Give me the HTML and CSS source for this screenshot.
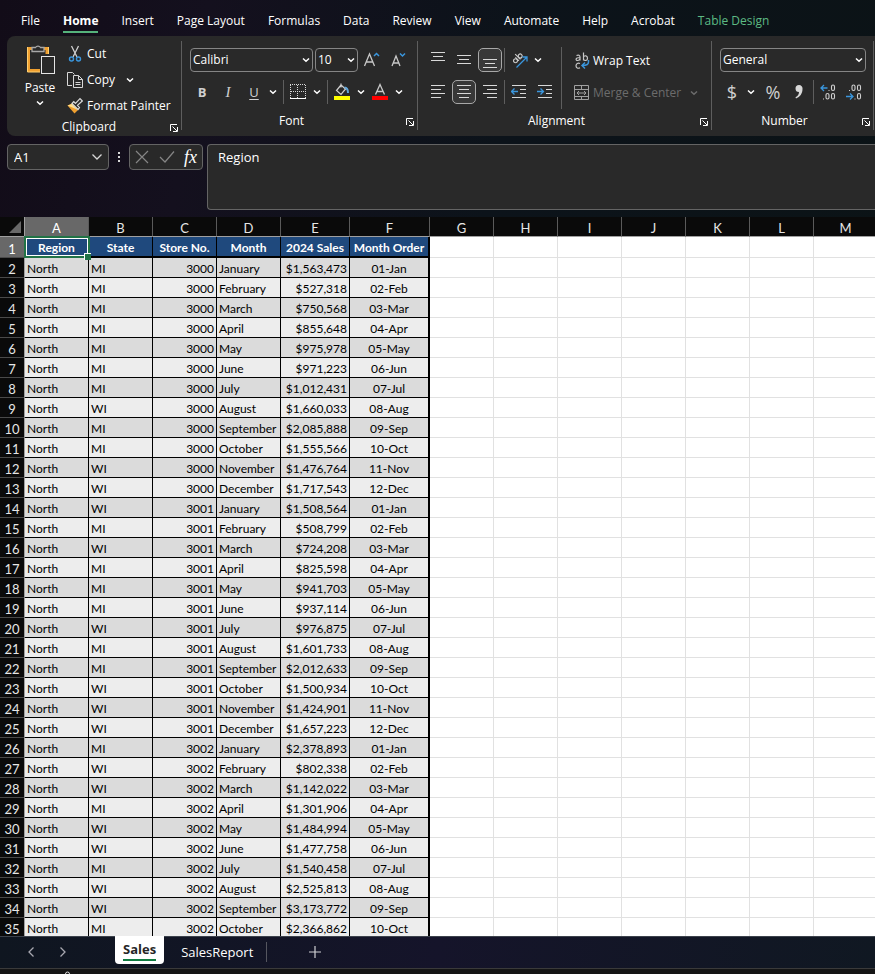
FILE: index.html
```html
<!DOCTYPE html>
<html lang="en">
<head>
<meta charset="utf-8">
<title>Sales workbook</title>
<link rel="stylesheet" href="styles.css">
</head>
<body>
<svg class="defs" aria-hidden="true">
  <symbol id="chev" viewBox="0 0 8 6"><path d="M1 1.5 4 4.3 7 1.5" fill="none" stroke="currentColor" stroke-width="1.5"/></symbol>
  <symbol id="launch" viewBox="0 0 10 10"><path d="M1.5 8V1.500H8M3.500 3.500 8 8M8.500 4v4.500H4" fill="none" stroke="currentColor"/></symbol>
</svg>

<nav class="tabs" aria-label="Ribbon tabs">
  <button>File</button>
  <button class="active">Home</button>
  <button>Insert</button>
  <button>Page Layout</button>
  <button>Formulas</button>
  <button>Data</button>
  <button>Review</button>
  <button>View</button>
  <button>Automate</button>
  <button>Help</button>
  <button>Acrobat</button>
  <button class="context">Table Design</button>
</nav>

<section class="ribbon" aria-label="Home ribbon">
  <div class="group clipboard">
    <div class="tools">
      <button class="paste">
        <svg width="30" height="32" viewBox="-1 0 30 32" fill="none">
          <path d="M6 5.500H2.500v22H14" stroke="#f0a030" stroke-width="3"/>
          <path d="M17 5.500h4V11" stroke="#f0a030" stroke-width="3"/>
          <path d="M1.500 4v25H14M22.500 4v7" stroke="#ffd070"/>
          <path d="M6 8.500v-4h3.500a3 3 0 0 1 5 0H18v4z" fill="#292929" stroke="#a8a8a8" stroke-width="1.300"/>
          <rect x="15.500" y="13.500" width="13" height="17" fill="#292929" stroke="#e4e4e4"/>
        </svg>
        <span>Paste</span>
        <svg class="chev"><use href="#chev"/></svg>
      </button>
      <div class="clip-list">
        <button>
          <svg width="16" height="18" viewBox="0 0 16 18" fill="none"><path d="M4.500 1 10 12M11.500 1 6 12" stroke="#d0d0d0" stroke-width="1.300"/><circle cx="4.500" cy="14" r="2" stroke="#3a96dd" stroke-width="1.400"/><circle cx="11.500" cy="14" r="2" stroke="#3a96dd" stroke-width="1.400"/></svg>
          <span>Cut</span>
        </button>
        <button>
          <svg width="16" height="18" viewBox="0 0 16 18" fill="none" stroke="#d8d8d8"><path d="M5 14.500H.5V1.500h5l2 2"/><path d="M6.500 4.500h5l4 4v8h-9zM11.500 4.500v4h4M8.500 11.500h5M8.500 13.500h5"/></svg>
          <span>Copy</span>
          <svg class="chev"><use href="#chev"/></svg>
        </button>
        <button>
          <svg width="16" height="18" viewBox="0 0 16 18" fill="none"><path d="M.5 8.500 6 6l6 6-4.500 4.500z" fill="#f0a030"/><path d="M.5 8.500 5 7l5 5.500z" fill="#ffe08a"/><path d="m5 6.500 6 6 1.500-2-2-2.200L15.300 4 13 1.700 8.500 6.300 6.700 4.700z" fill="#292929" stroke="#d8d8d8" stroke-width="1.200"/></svg>
          <span>Format Painter</span>
        </button>
      </div>
    </div>
    <footer><span>Clipboard</span><button class="launch" aria-label="Clipboard options"><svg><use href="#launch"/></svg></button></footer>
  </div>

  <div class="group font">
    <div class="tools rows">
      <div class="row">
        <label class="combo name"><select aria-label="Font"><option>Calibri</option></select><svg class="chev"><use href="#chev"/></svg></label>
        <label class="combo size"><select aria-label="Font size"><option>10</option></select><svg class="chev"><use href="#chev"/></svg></label>
        <button class="tool" aria-label="Increase font size"><svg width="18" height="18" viewBox="0 0 18 18" fill="none"><path d="M1.500 15 6.500 3l5 12M3.200 11h6.600" stroke="#c8c8c8" stroke-width="1.300"/><path d="m11 5 2.500-2.500L16 5" stroke="#3a96dd" stroke-width="1.500"/></svg></button>
        <button class="tool" aria-label="Decrease font size"><svg width="18" height="18" viewBox="0 0 18 18" fill="none"><path d="M3 15 7 5l4 10M4.300 12h5.400" stroke="#c8c8c8" stroke-width="1.300"/><path d="m11 2.500 2.500 2.500L16 2.500" stroke="#3a96dd" stroke-width="1.500"/></svg></button>
      </div>
      <div class="row">
        <button class="tool letter"><b>B</b></button>
        <button class="tool letter"><i>I</i></button>
        <button class="tool letter"><u>U</u></button>
        <button class="drop" aria-label="Underline styles"><svg class="chev"><use href="#chev"/></svg></button>
        <span class="sep"></span>
        <button class="tool" aria-label="Borders"><svg width="16" height="16" viewBox="0 0 16 16" fill="none"><path d="M0 .5h16M1 7.500h15M.5 1v13M7.500 1v13M15.500 1v13" stroke="#d8d8d8" stroke-dasharray="1 1"/><path d="M0 14.500h16" stroke="#fff"/></svg></button>
        <button class="drop" aria-label="Border styles"><svg class="chev"><use href="#chev"/></svg></button>
        <span class="sep"></span>
        <button class="tool" aria-label="Fill color"><svg width="16" height="18" viewBox="0 0 16 18" fill="none"><path d="M7 .5v4M7 2 2.500 7.500 7 11.500 11.500 6 7 2" stroke="#d0d0d0" stroke-width="1.200"/><path d="M10.500 4.500c2.500 0 3.500 1.500 3.500 5.500" stroke="#62a8dd" stroke-width="2"/><path d="M0 13h16v4H0z" fill="#ff0"/></svg></button>
        <button class="drop" aria-label="Fill colors"><svg class="chev"><use href="#chev"/></svg></button>
        <button class="tool" aria-label="Font color"><svg width="16" height="18" viewBox="0 0 16 18" fill="none"><path d="M3.500 11.500 8 1.500l4.500 10M5 8.500h6" stroke="#c8c8c8" stroke-width="1.300"/><path d="M0 13h16v4H0z" fill="#f00"/></svg></button>
        <button class="drop" aria-label="Font colors"><svg class="chev"><use href="#chev"/></svg></button>
      </div>
    </div>
    <footer><span>Font</span><button class="launch" aria-label="Font options"><svg><use href="#launch"/></svg></button></footer>
  </div>

  <div class="group alignment">
    <div class="tools">
      <div class="rows">
        <div class="row">
          <button class="tool" aria-label="Top align"><svg width="14" height="16"><path d="M0 .5h14M2 4.500h10M0 8.500h14" stroke="#d8d8d8"/></svg></button>
          <button class="tool" aria-label="Middle align"><svg width="14" height="16"><path d="M0 3.500h14M2 7.500h10M0 11.500h14" stroke="#d8d8d8"/></svg></button>
          <button class="tool on" aria-label="Bottom align"><svg width="14" height="16"><path d="M0 7.500h14M2 11.500h10M0 15.500h14" stroke="#d8d8d8"/></svg></button>
          <span class="sep"></span>
          <button class="tool" aria-label="Orientation"><svg width="17" height="17" viewBox="0 0 17 17" fill="none"><g transform="rotate(-45 7 7)" stroke="#c8c8c8" stroke-width="1.200"><circle cx="4" cy="6.500" r="2"/><path d="M6.300 4v5M8.500 1.500V9"/><circle cx="10.600" cy="6.500" r="2"/></g><path d="M5.500 15.500 15.500 5.500M11.500 5h4.500v4.500" stroke="#3a96dd" stroke-width="1.300"/></svg></button>
          <button class="drop" aria-label="Orientation choices"><svg class="chev"><use href="#chev"/></svg></button>
        </div>
        <div class="row">
          <button class="tool" aria-label="Align left"><svg width="14" height="16"><path d="M0 1.500h14M0 5.500h10M0 9.500h14M0 13.500h10" stroke="#d8d8d8"/></svg></button>
          <button class="tool on" aria-label="Center"><svg width="14" height="16"><path d="M0 1.500h14M2 5.500h10M0 9.500h14M2 13.500h10" stroke="#d8d8d8"/></svg></button>
          <button class="tool" aria-label="Align right"><svg width="14" height="16"><path d="M0 1.500h14M4 5.500h10M0 9.500h14M4 13.500h10" stroke="#d8d8d8"/></svg></button>
          <span class="sep"></span>
          <button class="tool" aria-label="Decrease indent"><svg width="16" height="16" fill="none"><path d="M1 1.500h14M9 5.500h6M9 9.500h6M1 13.500h14" stroke="#d8d8d8"/><path d="M1 7.500h6M3.500 4.500l-3 3 3 3" stroke="#3a96dd" stroke-width="1.300"/></svg></button>
          <button class="tool" aria-label="Increase indent"><svg width="16" height="16" fill="none"><path d="M1 1.500h14M9 5.500h6M9 9.500h6M1 13.500h14" stroke="#d8d8d8"/><path d="M0 7.500h6M3.500 4.500l3 3-3 3" stroke="#3a96dd" stroke-width="1.300"/></svg></button>
        </div>
      </div>
      <span class="sep tall"></span>
      <div class="rows labelled">
        <button>
          <svg width="16" height="18" viewBox="0 0 16 18" fill="none"><g stroke="#c8c8c8" stroke-width="1.200"><path d="M2.500 3.500c2-1 3.500-.3 3.500 1.500v3.500M6 5.500c-5 0-4.500 3-2.500 3 1.500 0 2.500-1 2.500-2M9.500.5v8M9.500 5c1-2 4-1.500 4 1.200s-3 3-4 1M6 11.500c-2-1-4 0-4 2.300s2 3 4 2"/></g><path d="M14.500 8v2c0 2.500-2 3.500-6 3.500M11 10.500l-3 3 3 3" stroke="#3a96dd" stroke-width="1.500"/></svg>
          <span>Wrap Text</span>
        </button>
        <button disabled>
          <svg width="16" height="18" viewBox="0 0 16 18" fill="none" stroke="#a0a0a0"><path d="M.5 1.500h14v14H.5zM.5 5.500h14M.5 12.500h14M7.500 1.500v4M7.500 12.500v3M3 9h9M5 7 3 9l2 2M10 7l2 2-2 2"/></svg>
          <span>Merge &amp; Center</span>
          <svg class="chev"><use href="#chev"/></svg>
        </button>
      </div>
    </div>
    <footer><span>Alignment</span><button class="launch" aria-label="Alignment options"><svg><use href="#launch"/></svg></button></footer>
  </div>

  <div class="group number">
    <div class="tools rows">
      <div class="row">
        <label class="combo format"><select aria-label="Number format"><option>General</option></select><svg class="chev"><use href="#chev"/></svg></label>
      </div>
      <div class="row">
        <button class="tool sign">$</button>
        <button class="drop" aria-label="Accounting formats"><svg class="chev"><use href="#chev"/></svg></button>
        <button class="tool sign percent">%</button>
        <button class="tool" aria-label="Comma style"><svg width="10" height="14" viewBox="0 0 10 14"><path d="M5 0a3.500 3.500 0 0 1 3.500 4C8.500 8.500 6 12 2 13.500L1.500 12.300C4 11 5 9 5 7a3.500 3.500 0 1 1 0-7z" fill="#d8d8d8"/></svg></button>
        <span class="sep"></span>
        <button class="tool" aria-label="Increase decimal"><svg width="16" height="16" viewBox="0 0 16 16" fill="none"><g stroke="#d0d0d0" stroke-width="1.100"><rect x="11.500" y="1" width="3" height="5.500" rx="1.500"/><rect x="6" y="9.500" width="3" height="5.500" rx="1.500"/><rect x="11.500" y="9.500" width="3" height="5.500" rx="1.500"/><path d="M8.500 6.500h1M3 15h1"/></g><path d="M1 4h6.500M4 1 1 4l3 3" stroke="#3a96dd" stroke-width="1.300"/></svg></button>
        <button class="tool" aria-label="Decrease decimal"><svg width="16" height="16" viewBox="0 0 16 16" fill="none"><g stroke="#d0d0d0" stroke-width="1.100"><rect x="6" y="1" width="3" height="5.500" rx="1.500"/><rect x="11.500" y="1" width="3" height="5.500" rx="1.500"/><rect x="11.500" y="9.500" width="3" height="5.500" rx="1.500"/><path d="M3 6.500h1M8.500 15h1"/></g><path d="M0 12.500h7M4 9.500l3 3-3 3" stroke="#3a96dd" stroke-width="1.300"/></svg></button>
      </div>
    </div>
    <footer><span>Number</span><button class="launch" aria-label="Number options"><svg><use href="#launch"/></svg></button></footer>
  </div>
</section>

<section class="formula-bar" aria-label="Formula bar">
  <label class="name-box"><input value="A1" aria-label="Name box"><svg width="12" height="8" viewBox="0 0 12 8"><path d="m1.500 1.500 4.500 4.500 4.500-4.500" fill="none" stroke="#d8d8d8" stroke-width="1.300"/></svg></label>
  <span class="grip"><i></i><i></i><i></i></span>
  <div class="entry">
    <button aria-label="Cancel"><svg width="14" height="14"><path d="m1 1 12 12M13 1 1 13" stroke="#858585" stroke-width="1.200"/></svg></button>
    <button aria-label="Enter"><svg width="16" height="14"><path d="m1 7 5 5L15 1.500" fill="none" stroke="#858585" stroke-width="1.200"/></svg></button>
    <button class="fx">fx</button>
  </div>
  <textarea aria-label="Formula">Region</textarea>
</section>

<main class="sheet">
  <table>
    <colgroup><col class="c-head"><col span="4"><col class="c-sales"><col class="c-order"><col span="7"></colgroup>
    <thead id="letters"></thead>
    <tbody id="cells"></tbody>
  </table>
</main>

<nav class="sheet-tabs" aria-label="Sheets">
  <button class="step" aria-label="Previous sheet"><svg width="8" height="12"><path d="M6.500 1.500 2 6l4.500 4.500" fill="none" stroke="#a8a8b0" stroke-width="1.300"/></svg></button>
  <button class="step" aria-label="Next sheet"><svg width="8" height="12"><path d="M1.500 1.500 6 6l-4.500 4.500" fill="none" stroke="#a8a8b0" stroke-width="1.300"/></svg></button>
  <button class="tab current"><span>Sales</span></button>
  <button class="tab">SalesReport</button>
  <button class="add" aria-label="New sheet"><svg width="12" height="12"><path d="M6 0v12M0 6h12" stroke="#d0d0d4" stroke-width="1.200"/></svg></button>
</nav>
<div class="status"><svg width="7" height="5"><circle cx="3.500" cy="5" r="2" fill="none" stroke="#e0e0e0"/></svg></div>
<script src="sheet.js"></script>
</body>
</html>
```
FILE: styles.css
```css
* { box-sizing: border-box; }

body {
  margin: 0;
  height: 100vh;
  display: flex;
  flex-direction: column;
  overflow: hidden;
  background: linear-gradient(100deg, #120c18 0, #14101e 20%, #0c131a 50%, #0b1315 100%);
  color: #fff;
  font: 12px/16px "Open Sans", "Noto Sans", sans-serif;
}

.defs { position: absolute; width: 0; height: 0; }

button, select, input, textarea {
  margin: 0;
  padding: 0;
  border: 0;
  background: none;
  color: inherit;
  font: inherit;
  outline: 0;
}

button { white-space: nowrap; }
svg { display: block; flex: none; }
.chev { width: 8px; height: 6px; }

/* Ribbon tabs */
.tabs {
  flex: none;
  display: flex;
  align-items: flex-end;
  gap: 23px;
  height: 36px;
  padding: 0 21px 3px;
}
.tabs button { height: 20px; padding-bottom: 2px; border-bottom: 2px solid transparent; }
.tabs .active { font-weight: 700; border-color: #55b27b; }
.tabs .context { color: #5dba84; }

/* Ribbon */
.ribbon {
  flex: none;
  display: flex;
  height: 100px;
  margin-left: 7px;
  background: #292929;
  border-radius: 8px 0 0 8px;
}
.group {
  flex: none;
  display: flex;
  flex-direction: column;
  margin: 5px 0 6px;
  border-right: 1px solid #5e5e5e;
}
.clipboard { width: 175px; }
.font { width: 236px; }
.alignment { width: 294px; }
.number { width: 162px; }

.tools { flex: 1; display: flex; }
.group footer { position: relative; height: 16px; margin-bottom: 1px; text-align: center; }
.clipboard footer { padding-right: 10px; }
.font footer, .alignment footer, .number footer { padding-right: 16px; }
.launch { position: absolute; right: 2px; bottom: 2px; }
.launch svg { width: 10px; height: 10px; }

.paste { width: 66px; display: flex; flex-direction: column; align-items: center; padding-top: 2px; }
.paste span { margin: 5px 0 4px; }
.clip-list button { display: flex; align-items: center; gap: 4px; height: 26px; }
.clip-list { margin-left: -6px; }
.clip-list .chev { margin-left: 7px; }

.rows { flex-direction: column; gap: 8px; }
.alignment .rows { display: flex; }
.rows { padding: 7px 0 0 8px; }
.row { display: flex; align-items: center; gap: 2px; height: 24px; }
.tool { width: 24px; height: 24px; display: flex; align-items: center; justify-content: center; color: #d0d0d0; }
.tool.on { border: 1px solid #a8a8a8; border-radius: 5px; background: #383838; }
.letter { font-size: 13px; }
.letter i { font-family: "Liberation Serif", serif; font-size: 15px; }
.letter u { text-underline-offset: 2px; }
.drop { width: 10px; height: 24px; display: flex; align-items: center; justify-content: center; }
.sep { width: 1px; height: 24px; background: #5e5e5e; }
.font .sep { margin-left: 3px; }
.sep.tall { height: 62px; margin: 6px 0 0 4px; }

.combo {
  display: grid;
  align-items: center;
  height: 24px;
  border: 1px solid #858585;
  border-radius: 4px;
}
.combo > * { grid-area: 1 / 1; }
.combo select { appearance: none; width: 100%; height: 22px; padding-left: 2px; font-size: 12px; }
.combo .chev { justify-self: end; margin-right: 2px; pointer-events: none; }
.combo.name { width: 123px; }
.combo.size { width: 43px; }
.combo.format { width: 146px; }

.alignment .labelled { padding: 8px 0 0 12px; }
.labelled button { display: flex; align-items: center; gap: 3px; height: 24px; }
.labelled button:disabled { color: #6c6c6c; }
.labelled .chev { margin-left: 6px; }

.sign { font-size: 18px; line-height: 24px; }
.percent { margin-left: 3px; }

/* Formula bar */
.formula-bar {
  flex: none;
  display: flex;
  align-items: flex-start;
  height: 81px;
  padding: 8px 0 7px 7px;
  font-size: 13px;
}
.name-box, .entry, .formula-bar textarea {
  background: #292929;
  border: 1px solid #646464;
  border-radius: 4px;
}
.name-box { display: flex; align-items: center; width: 102px; height: 26px; padding: 0 5px 0 6px; }
.name-box input { flex: 1; min-width: 0; }
.grip { display: flex; flex-direction: column; gap: 2px; width: 20px; height: 26px; align-items: center; justify-content: center; }
.grip i { width: 2px; height: 2px; background: #d8d8d8; }
.entry { display: flex; align-items: center; justify-content: space-between; width: 74px; height: 26px; padding: 0 5px; }
.fx { font: italic 18px/20px "Liberation Serif", serif; }
.formula-bar textarea {
  flex: 1;
  height: 66px;
  margin-left: 4px;
  padding: 4px 10px;
  border-right: 0;
  border-radius: 4px 0 0 4px;
  resize: none;
  overflow: hidden;
}

/* Grid */
.sheet { flex: 1; min-height: 0; overflow: hidden; background: #fff; }
table { width: 878px; table-layout: fixed; border-collapse: separate; border-spacing: 0; color: #000; font: 12px/16px Lato, sans-serif; }
col { width: 64px; }
.c-head { width: 25px; }
.c-sales { width: 69px; }
.c-order { width: 80px; }
th, td { height: 20px; padding: 3px 2px 0; white-space: nowrap; overflow: hidden; }
tbody td { border-right: 1px solid #e1e1e1; border-bottom: 1px solid #e1e1e1; }
thead th {
  background: #0a0a0a;
  color: #e6e6e6;
  border-right: 1px solid #5a5a5a;
  border-bottom: 1px solid #a0a0a0;
  font-size: 13px;
  font-weight: 400;
}
tbody th { background: #0a0a0a; color: #e6e6e6; border-right: 1px solid #a0a0a0; border-bottom: 1px solid #4a4a4a; font-size: 13px; font-weight: 400; padding: 3px 0 0; }
thead .picked, tbody .picked { background: #686868; color: #fff; }
.corner svg { margin: 0 0 0 7px; }
thead .corner { padding: 0; border-right-color: #a0a0a0; }

tbody .data { background: #ededed; border-color: #000; }
tbody tr:nth-child(even) .data { background: #dbdbdb; }
tbody .title { height: 21px; background: #1f497d; color: #fff; border-color: #000; border-bottom-width: 2px; font-weight: 700; text-align: center; padding: 2px 0 0; }
tbody .last { border-right-width: 2px; }
.num { text-align: right; }
.mid { text-align: center; }
tbody .active-cell { position: relative; overflow: visible; }
.active-cell::before { content: ""; position: absolute; inset: 0 -1px -1px 0; box-shadow: inset 0 0 0 2px #fff; outline: 2px solid #217346; outline-offset: -1px; }
.active-cell::after { content: ""; position: absolute; right: -3px; bottom: -4px; width: 6px; height: 6px; background: #217346; border: solid #fff; border-width: 1px 0 0 1px; }

/* Sheet tabs and status */
.sheet-tabs {
  flex: none;
  display: flex;
  height: 33px;
  padding-bottom: 2px;
  border-top: 1px solid #3c424c;
  border-bottom: 1px solid #3a3a3a;
  background: linear-gradient(90deg, #0f1620, #15142a 50%, #101822);
  font-size: 13px;
}
.step { width: 32px; display: flex; align-items: center; justify-content: center; }
.step:first-child { margin-left: 15px; }
.tab { align-self: center; height: 20px; padding: 0 13px; border-right: 1px solid #55565f; }
.tab.current {
  align-self: flex-start;
  height: 28px;
  margin: -1px 4px 0 36px;
  padding: 1px 8px 0;
  border: 0;
  border-radius: 0 0 4px 4px;
  background: #fff;
  color: #262626;
  font-weight: 700;
}
.current span { display: block; height: 20px; border-bottom: 2px solid #107c41; }
.add { margin-left: 42px; display: flex; align-items: center; }
.status { flex: none; height: 5px; padding-left: 64px; background: #151515; }
```
FILE: sheet.js
```js
const months = ["January", "February", "March", "April", "May", "June", "July",
  "August", "September", "October", "November", "December"];

const states = ("MI MI MI MI MI MI MI WI MI MI WI WI " +
  "WI MI WI MI MI MI WI MI MI WI WI WI " +
  "MI WI WI MI WI WI MI WI WI MI").split(" ");

const sales = [
  1563473, 527318, 750568, 855648, 975978, 971223, 1012431, 1660033, 2085888, 1555566, 1476764, 1717543,
  1508564, 508799, 724208, 825598, 941703, 937114, 976875, 1601733, 2012633, 1500934, 1424901, 1657223,
  2378893, 802338, 1142022, 1301906, 1484994, 1477758, 1540458, 2525813, 3173772, 2366862
];

const blanks = "<td></td>".repeat(7);

document.getElementById("letters").innerHTML =
  '<tr><th class="corner"><svg width="14" height="12"><path d="M14 0v12H2z" fill="#686868"/></svg></th>' +
  [..."ABCDEFGHIJKLM"].map(c => `<th${c === "A" ? ' class="picked"' : ""}>${c}</th>`).join("") + "</tr>";

const titles = ["Region", "State", "Store No.", "Month", "2024 Sales", "Month Order"];
let html = '<tr><th class="picked">1</th>' + titles.map((t, i) =>
  `<td class="title${i === 0 ? " active-cell" : ""}${i === 5 ? " last" : ""}">${t}</td>`).join("") + blanks + "</tr>";

sales.forEach((amount, i) => {
  const m = i % 12;
  const order = String(m + 1).padStart(2, "0") + "-" + months[m].slice(0, 3);
  html += `<tr><th>${i + 2}</th><td class="data">North</td><td class="data">${states[i]}</td>` +
    `<td class="data num">${3000 + Math.floor(i / 12)}</td><td class="data">${months[m]}</td>` +
    `<td class="data num">$${amount.toLocaleString("en-US")}</td><td class="data mid last">${order}</td>${blanks}</tr>`;
});

document.getElementById("cells").innerHTML = html;
```
